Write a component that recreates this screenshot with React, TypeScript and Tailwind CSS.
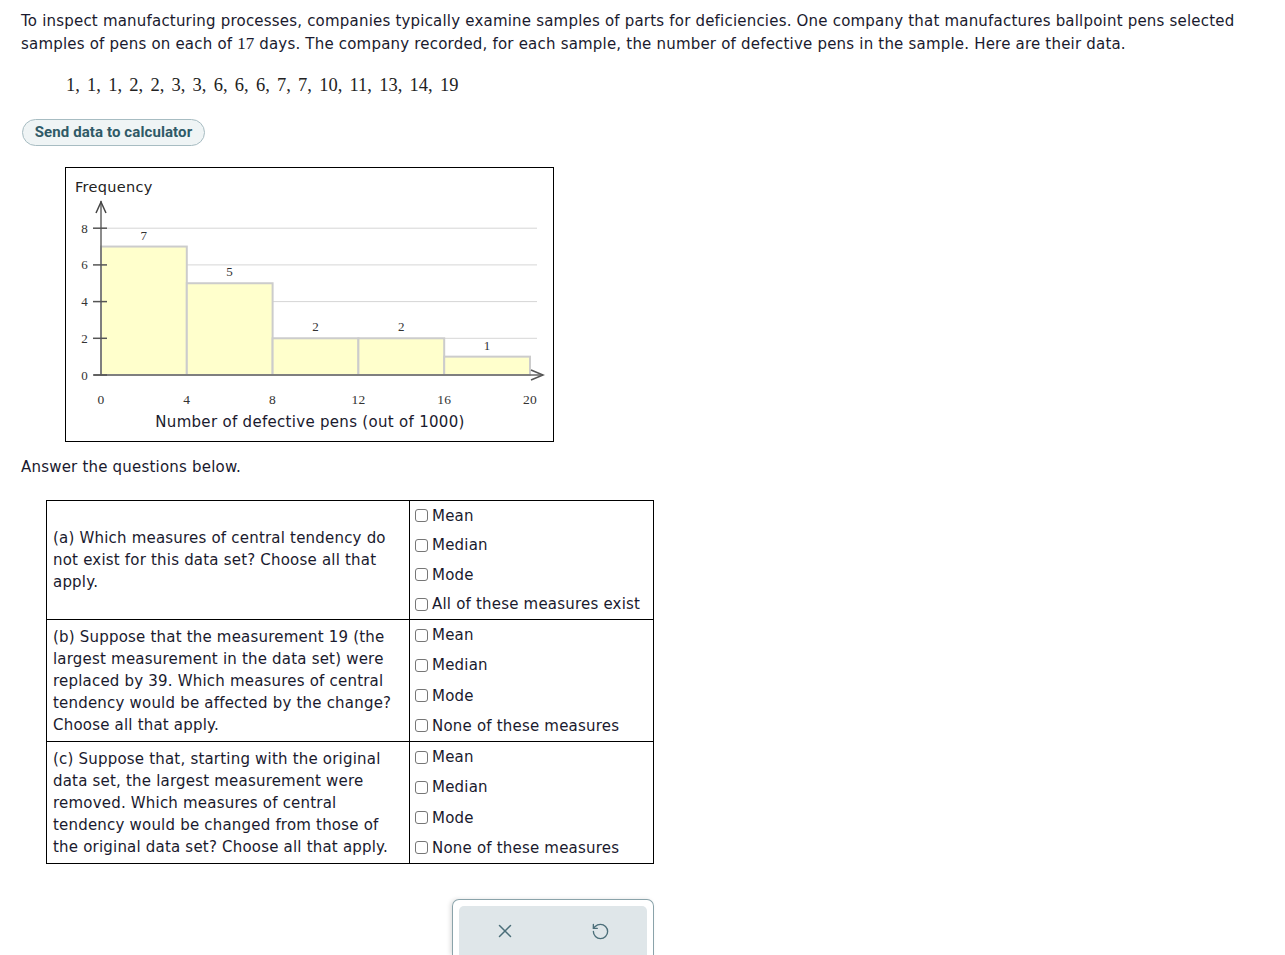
import { RotateCcw, X } from "lucide-react";

const bars = [
  { from: 0, count: 7 },
  { from: 4, count: 5 },
  { from: 8, count: 2 },
  { from: 12, count: 2 },
  { from: 16, count: 1 },
];

const questions = [
  {
    text: "(a) Which measures of central tendency do not exist for this data set? Choose all that apply.",
    options: ["Mean", "Median", "Mode", "All of these measures exist"],
    height: "h-[118px]",
  },
  {
    text: "(b) Suppose that the measurement 19 (the largest measurement in the data set) were replaced by 39. Which measures of central tendency would be affected by the change? Choose all that apply.",
    options: ["Mean", "Median", "Mode", "None of these measures"],
    height: "h-[122px]",
  },
  {
    text: "(c) Suppose that, starting with the original data set, the largest measurement were removed. Which measures of central tendency would be changed from those of the original data set? Choose all that apply.",
    options: ["Mean", "Median", "Mode", "None of these measures"],
    height: "h-[122px]",
  },
];

const X0 = 35;
const Y0 = 207;
const UX = 21.45;
const UY = 18.35;

function Histogram() {
  const sx = (v: number) => X0 + v * UX;
  const sy = (v: number) => Y0 - v * UY;

  return (
    <div className="ml-[44px] mt-[21px] h-[275px] w-[489px] border border-black">
      <svg width="487" height="273" className="block">
        {[2, 4, 6, 8].map((v) => (
          <line key={v} x1={X0} x2={471} y1={sy(v)} y2={sy(v)} stroke="#d6d6d6" strokeWidth="1" />
        ))}
        {bars.map((b) => (
          <g key={b.from}>
            <rect
              x={sx(b.from)}
              y={sy(b.count)}
              width={UX * 4}
              height={b.count * UY}
              fill="#ffffcc"
              stroke="#cccccc"
              strokeWidth="2"
            />
            <text
              x={sx(b.from + 2)}
              y={sy(b.count) - 7}
              textAnchor="middle"
              fontFamily="'Liberation Serif', serif"
              fontSize="13"
              fill="#333"
            >
              {b.count}
            </text>
          </g>
        ))}
        <line x1={X0} x2={X0} y1={Y0} y2={33} stroke="#666" strokeWidth="1.5" />
        <polyline points="30,45 35,34 40,45" fill="none" stroke="#444" strokeWidth="1.5" />
        <line x1={X0 - 7} x2={477} y1={Y0} y2={Y0} stroke="#666" strokeWidth="1.5" />
        <polyline points="465,202 477,207 465,212" fill="none" stroke="#555" strokeWidth="1.5" />
        {[0, 2, 4, 6, 8].map((v) => (
          <g key={v}>
            <line x1={X0 - 8} x2={X0 + 6} y1={sy(v)} y2={sy(v)} stroke="#555" strokeWidth="1.5" />
            <text
              x={X0 - 13}
              y={sy(v) + 4.5}
              textAnchor="end"
              fontFamily="'Liberation Serif', serif"
              fontSize="13"
              fill="#333"
            >
              {v}
            </text>
          </g>
        ))}
        {[0, 4, 8, 12, 16, 20].map((v) => (
          <text
            key={v}
            x={sx(v)}
            y={236}
            textAnchor="middle"
            fontFamily="'Liberation Serif', serif"
            fontSize="13.5"
            fill="#333"
          >
            {v}
          </text>
        ))}
        <text x={9} y={24} fontFamily="'DejaVu Sans', sans-serif" fontSize="14.5" letterSpacing="0.3" fill="#222">
          Frequency
        </text>
        <text
          x={244}
          y={259}
          textAnchor="middle"
          fontFamily="'DejaVu Sans', sans-serif"
          fontSize="15"
          letterSpacing="0.3"
          fill="#1a1a2e"
        >
          Number of defective pens (out of 1000)
        </text>
      </svg>
    </div>
  );
}

function Checkbox() {
  return <span className="mr-[4px] inline-block h-[13px] w-[13px] shrink-0 rounded-[3px] border border-[#767676] bg-white" />;
}

export default function App() {
  return (
    <div className="min-h-screen bg-white pl-[21px] pt-[10px] font-['DejaVu_Sans',sans-serif] text-[15px] leading-[23px] tracking-[0.2px] text-[#1a1a2e]">
      <p className="w-[1235px]">
        To inspect manufacturing processes, companies typically examine samples of parts for deficiencies. One company
        that manufactures ballpoint pens selected samples of pens on each of{" "}
        <span className="font-['Liberation_Serif',serif] text-[17px] leading-none tracking-normal">17</span> days. The
        company recorded, for each sample, the number of defective pens in the sample. Here are their data.
      </p>

      <p className="ml-[45px] mt-[18px] font-['Liberation_Serif',serif] text-[18.5px] tracking-normal [word-spacing:2.6px] text-[#222]">
        1, 1, 1, 2, 2, 3, 3, 6, 6, 6, 7, 7, 10, 11, 13, 14, 19
      </p>

      <button className="mt-[22px] ml-px flex h-[27px] w-[183px] items-center justify-center rounded-full border border-[#a7bcc2] bg-[#eff4f5] font-['Roboto',sans-serif] text-[15px] font-bold tracking-[0.1px] text-[#2f5a67]">
        Send data to calculator
      </button>

      <Histogram />

      <p className="mt-[14px]">Answer the questions below.</p>

      <div className="ml-[25px] mt-[21px] w-[608px] border border-black">
        {questions.map((q, i) => (
          <div key={i} className={`flex ${q.height} ${i > 0 ? "border-t border-black" : ""}`}>
            <div className="flex w-[363px] shrink-0 items-center border-r border-black px-[6px] leading-[22px]">
              <p>{q.text}</p>
            </div>
            <div className="flex flex-1 flex-col justify-around px-[5px]">
              {q.options.map((o) => (
                <label key={o} className="flex items-center leading-[20px]">
                  <Checkbox />
                  {o}
                </label>
              ))}
            </div>
          </div>
        ))}
      </div>

      <div className="ml-[431px] mt-[35px] h-[56px] w-[202px] rounded-t-[7px] border border-b-0 border-[#8aa3aa] px-[6px] pt-[6px] shadow-[-2px_0_4px_rgba(0,0,0,0.12)]">
        <div className="flex h-[50px] items-center justify-between rounded-t-[5px] bg-[#dfe6e9] pl-[35px] pr-[37px] text-[#4b6e79]">
          <X size={22} strokeWidth={1.6} />
          <RotateCcw size={19} strokeWidth={1.7} />
        </div>
      </div>
    </div>
  );
}
